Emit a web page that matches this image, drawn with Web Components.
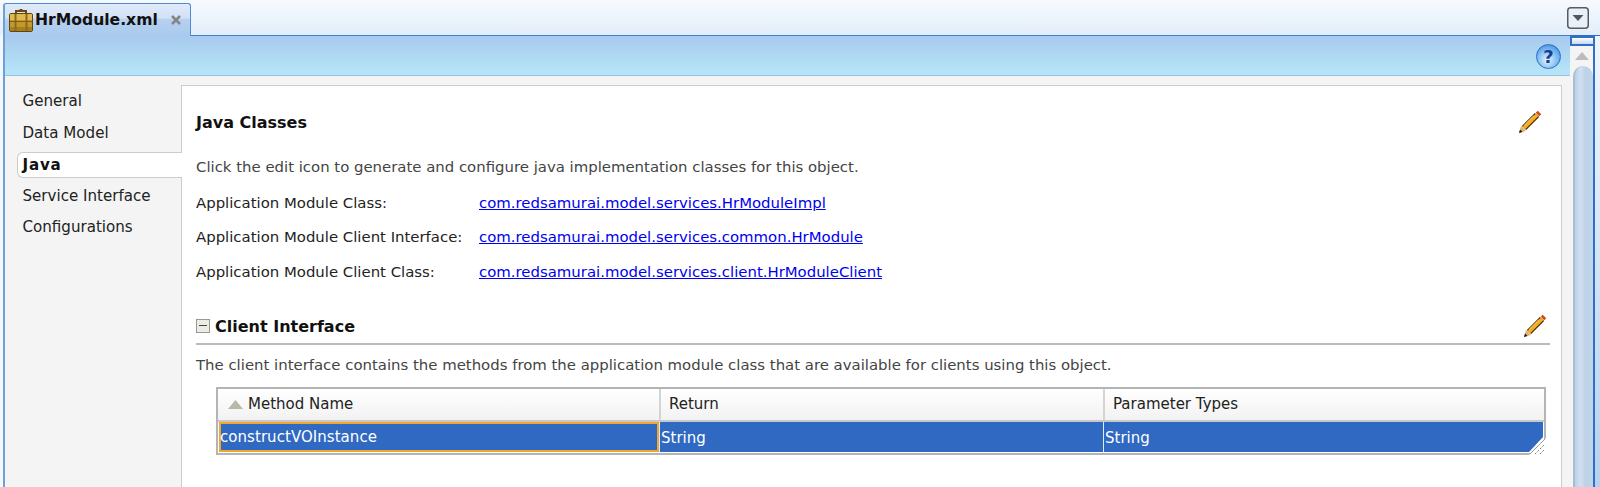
<!DOCTYPE html>
<html>
<head>
<meta charset="utf-8">
<style>
  html, body { margin: 0; height: 100%; overflow: hidden; }
  body { font-family: "DejaVu Sans", sans-serif; font-size: 14.9px; color: #222; background: #f4f8fd; }
</style>
</head>
<body>
<ide-shell></ide-shell>
<script>
const BAG = `<svg width="24" height="23" viewBox="0 0 24 23">
  <path d="M7 5V2h10v3" fill="none" stroke="#6b4a12" stroke-width="2"/>
  <rect x="10.500" y="0" width="3" height="2" fill="#6b4a12"/>
  <rect x=".5" y="4.500" width="23" height="18" rx="1.500" fill="#c4982c" stroke="#5f4510"/>
  <rect x="1" y="5" width="22" height="6" fill="#e0b94f"/>
  <path d="M1 18h22v4H1z" fill="#a87f1e"/>
  <path d="M6.500 5v17M17.500 5v17" stroke="#8a6a1e" stroke-width="2"/>
  <path d="M1 12.500h22" stroke="#7d5f18"/>
</svg>`;

const PENCIL = `<svg width="24" height="24" viewBox="0 0 24 24">
  <path d="M6 18L19 5" stroke="#4a2506" stroke-width="6"/>
  <path d="M5.500 18.500L19 5" stroke="#f7ad1c" stroke-width="3.500"/>
  <path d="M6 15.500L16 5.500" stroke="#ffe28a" stroke-width="1"/>
  <path d="M19.500 4.500l2-2" stroke="#cf4c10" stroke-width="5"/>
  <path d="M1 23l2-7 5 5z" fill="#d9b47a"/>
  <path d="M1 23l1-3.500 2.500 2.500z" fill="#2a1606"/>
</svg>`;

class IdeShell extends HTMLElement {
  constructor() {
    super();
    this.attachShadow({ mode: 'open' });
    this.shadowRoot.innerHTML = `
      <style>
        :host { display: block; width: 1600px; height: 487px; overflow: hidden; }
        .strip { display: flex; height: 35px; padding-left: 3px; box-sizing: border-box; background: linear-gradient(#f6fafe, #e2eefa); }
        .main { display: flex; height: 452px; padding-left: 3px; }
        .editor { flex: 1; border-left: 2px solid #6d9fd8; display: flex; flex-direction: column; min-width: 0; }
        .band { height: 41px; box-sizing: border-box; display: flex; justify-content: flex-end; align-items: center; padding: 2px 9px 0 0; border-top: 1px solid #3f7fd0; background: linear-gradient(#a8caee, #b6e6f8); border-bottom: 1px solid #9cc0e0; }
        .body { flex: 1; display: flex; background: #f4f4f4; min-height: 0; }
        .drop { display: flex; align-items: center; margin-right: 11px; }
      </style>
      <div class="strip">
        <ide-tab label="HrModule.xml"></ide-tab>
        <span style="flex:1"></span>
        <span class="drop"><svg width="22" height="22" viewBox="0 0 22 22"><rect x=".75" y=".75" width="20.500" height="20.500" rx="3" fill="#e8f1fa" stroke="#5a5a5a" stroke-width="1.500"/><path d="M5.500 8h11l-5.500 6z" fill="#555"/></svg></span>
      </div>
      <div class="main">
        <div class="editor">
          <div class="band"><help-icon></help-icon></div>
          <div class="body">
            <side-nav></side-nav>
            <java-panel></java-panel>
          </div>
        </div>
        <ide-scrollbar></ide-scrollbar>
      </div>`;
  }
}

class IdeTab extends HTMLElement {
  constructor() {
    super();
    this.attachShadow({ mode: 'open' });
    this.shadowRoot.innerHTML = `
      <style>
        :host { display: flex; align-items: center; width: 188px; height: 33px; margin-top: 3px; box-sizing: border-box; padding-left: 4px;
          border: 1px solid #4f8ad4; border-left-width: 2px; border-left-color: #6d9fd8; border-bottom: none; border-radius: 3px 3px 0 0; position: relative; z-index: 1;
          background: linear-gradient(#e0ebfa 0, #d2e1f5 45%, #b8d1f0 46%, #a8caee 100%); font-weight: bold; font-size: 15.600px; color: #111; }
        .x { display: flex; margin-left: auto; margin-right: 8px; }
      </style>
      <span style="display:flex;margin-right:2px">${BAG}</span><span>${this.getAttribute('label')}</span>
      <span class="x"><svg width="12" height="12" viewBox="0 0 12 12"><path d="M2 2l8 8M10 2l-8 8" stroke="#858585" stroke-width="2.500"/></svg></span>`;
  }
}

class HelpIcon extends HTMLElement {
  constructor() {
    super();
    this.attachShadow({ mode: 'open' });
    this.shadowRoot.innerHTML = `
      <style>
        :host { display: block; width: 25px; height: 25px; border-radius: 50%; box-sizing: border-box; border: 1px solid #2a6fc4;
          background: radial-gradient(circle at 45% 65%, #e8f6ff, #6cb0ee 60%, #2b74cf); color: #173f94; font: bold 18px/23px "DejaVu Sans", sans-serif; text-align: center; }
      </style>?`;
  }
}

class SideNav extends HTMLElement {
  constructor() {
    super();
    this.attachShadow({ mode: 'open' });
    const items = ['General', 'Data Model', 'Java', 'Service Interface', 'Configurations'];
    this.shadowRoot.innerHTML = `
      <style>
        :host { display: block; width: 176px; flex: none; padding: 10.300px 0 0 0; position: relative; z-index: 1; box-sizing: border-box; }
        div { height: 31.500px; line-height: 31.500px; margin-left: 11.500px; padding-left: 6px; box-sizing: border-box; color: #222; font-size: 15.100px; }
        .on { height: 26.500px; line-height: 24.500px; margin-top: 2.500px; margin-bottom: 2.500px; margin-right: -1px; background: #fff; border: 1px solid #ccc; border-right: none; border-radius: 6px 0 0 6px; font-weight: bold; color: #111; padding-left: 5px; letter-spacing: .8px; }
      </style>
      ${items.map(i => `<div class="${i === 'Java' ? 'on' : ''}">${i}</div>`).join('')}`;
  }
}

class FormRow extends HTMLElement {
  constructor() {
    super();
    this.attachShadow({ mode: 'open' });
    this.shadowRoot.innerHTML = `
      <style>
        :host { display: flex; height: 34.500px; align-items: center; }
        .l { width: 283px; flex: none; }
        a { color: #0000f0; text-decoration: underline; }
      </style>
      <span class="l">${this.getAttribute('label')}</span><a href="#"><slot></slot></a>`;
  }
}

class SectionHead extends HTMLElement {
  constructor() {
    super();
    this.attachShadow({ mode: 'open' });
    this.shadowRoot.innerHTML = `
      <style>
        :host { display: flex; align-items: center; height: 24px; font-weight: bold; font-size: 16px; color: #111; }
        .g { flex: 1; }
        .p { display: flex; }
      </style>
      <slot name="pre"></slot><slot></slot><span class="g"></span><span class="p">${PENCIL}</span>`;
  }
}

class MethodTable extends HTMLElement {
  constructor() {
    super();
    this.attachShadow({ mode: 'open' });
    this.shadowRoot.innerHTML = `
      <style>
        :host { display: block; margin: 12px 4px 0 20px; height: 68px; box-sizing: border-box; border: 2px solid #b4b4b4; padding: 0 1px; position: relative; font-size: 15px; background: #fff; }
        .r { display: grid; grid-template-columns: 440px 444px 1fr; }
        .h { height: 33px; margin: 0 -1px; padding: 0 1px; background: linear-gradient(#fff, #f2f2f2); border-bottom: 2px solid #c8c8c8; box-sizing: border-box; }
        .h span { line-height: 31px; padding-left: 8px; border-left: 2px solid #d4d4d4; color: #222; }
        .h span:first-child { border-left: none; padding-left: 9px; display: flex; align-items: center; gap: 5px; }
        .b { height: 30px; background: #2f69c2; color: #fff; clip-path: polygon(0 0, 100% 0, 100% 15px, calc(100% - 14px) 100%, 0 100%); }
        .b span { display: flex; align-items: center; padding: 1px 0 0 1px; border-left: 1px solid #dfe8f5; box-sizing: border-box; }
        .b span:first-child { border: 2px solid #f0a830; padding: 0; text-indent: -1px; letter-spacing: .05px; }
        .grip { position: absolute; right: -2px; bottom: -2px; }
      </style>
      <div class="r h"><span><svg width="15" height="9" viewBox="0 0 15 9"><path d="M0 9L7.500 0 15 9z" fill="#b8b8a4"/></svg>Method Name</span><span>Return</span><span>Parameter Types</span></div>
      <div class="r b"><span>constructVOInstance</span><span>String</span><span>String</span></div>
      <svg class="grip" width="17" height="17" viewBox="0 0 17 17"><path d="M17 0v17H0z" fill="#fff"/><path d="M1 16L16 1" stroke="#9a9a9a"/><path d="M6 16L16 6M11 16l5-5" stroke="#777" stroke-dasharray="2 1.500"/></svg>`;
  }
}

class JavaPanel extends HTMLElement {
  constructor() {
    super();
    this.attachShadow({ mode: 'open' });
    this.shadowRoot.innerHTML = `
      <style>
        :host { display: block; flex: 1; min-width: 0; margin: 9px 8px 0 0; background: #fff; border: 1px solid #ccc; border-bottom: none; padding: 24px 11px 0 14px; box-sizing: border-box; }
        .desc { color: #444; margin: 0; line-height: 20px; }
        .box { flex: none; width: 14px; height: 14px; box-sizing: border-box; border: 1px solid #999; background: #ecece2; margin-right: 5px; position: relative; }
        .box::after { content: ""; position: absolute; left: 2px; right: 2px; top: 5px; height: 1px; background: #444; }
        .rule { border-top: 2px solid #bbb; margin-top: 5px; }
      </style>
      <section-head style="margin-right:8px">Java Classes</section-head>
      <p class="desc" style="margin:23px 0 8.400px">Click the edit icon to generate and configure java implementation classes for this object.</p>
      <form-row label="Application Module Class:">com.redsamurai.model.services.HrModuleImpl</form-row>
      <form-row label="Application Module Client Interface:">com.redsamurai.model.services.common.HrModule</form-row>
      <form-row label="Application Module Client Class:">com.redsamurai.model.services.client.HrModuleClient</form-row>
      <section-head style="margin:25.200px 3px 0 0"><span class="box" slot="pre"></span>Client Interface</section-head>
      <div class="rule"></div>
      <p class="desc" style="margin-top:10px">The client interface contains the methods from the application module class that are available for clients using this object.</p>
      <method-table></method-table>`;
  }
}

class IdeScrollbar extends HTMLElement {
  constructor() {
    super();
    this.attachShadow({ mode: 'open' });
    this.shadowRoot.innerHTML = `
      <style>
        :host { display: flex; flex-direction: column; width: 30px; flex: none; box-sizing: border-box; border-top: 1px solid #2f6fc8; background: linear-gradient(#eef5fc, #e0ecf8 30%, #b6d2ee); }
        .track { flex: 1; display: flex; flex-direction: column; margin-right: 5px; background: #f4f4f4; border-right: 2px solid #2f6fc8; }
        .cap { height: 10px; box-sizing: border-box; border: 2px solid #2f6fc8; border-right: none; background: linear-gradient(#fff, #c8d8ec); }
        .up { height: 20px; display: flex; justify-content: center; align-items: center; }
        .thumb { flex: 1; margin-left: 3px; border-radius: 10px 10px 0 0; border-left: 2px solid #a9bdd4; background: linear-gradient(90deg, #bcd0e6, #d0e0f0 30%, #bdd2e8 60%, #c2d6ea); }
      </style>
      <div class="track">
        <div class="cap"></div>
        <div class="up"><svg width="14" height="8" viewBox="0 0 14 8"><path d="M0 8L7 0l7 8z" fill="#bcbcbc"/></svg></div>
        <div class="thumb"></div>
      </div>`;
  }
}

customElements.define('ide-tab', IdeTab);
customElements.define('help-icon', HelpIcon);
customElements.define('side-nav', SideNav);
customElements.define('form-row', FormRow);
customElements.define('section-head', SectionHead);
customElements.define('method-table', MethodTable);
customElements.define('java-panel', JavaPanel);
customElements.define('ide-scrollbar', IdeScrollbar);
customElements.define('ide-shell', IdeShell);
</script>
</body>
</html>
